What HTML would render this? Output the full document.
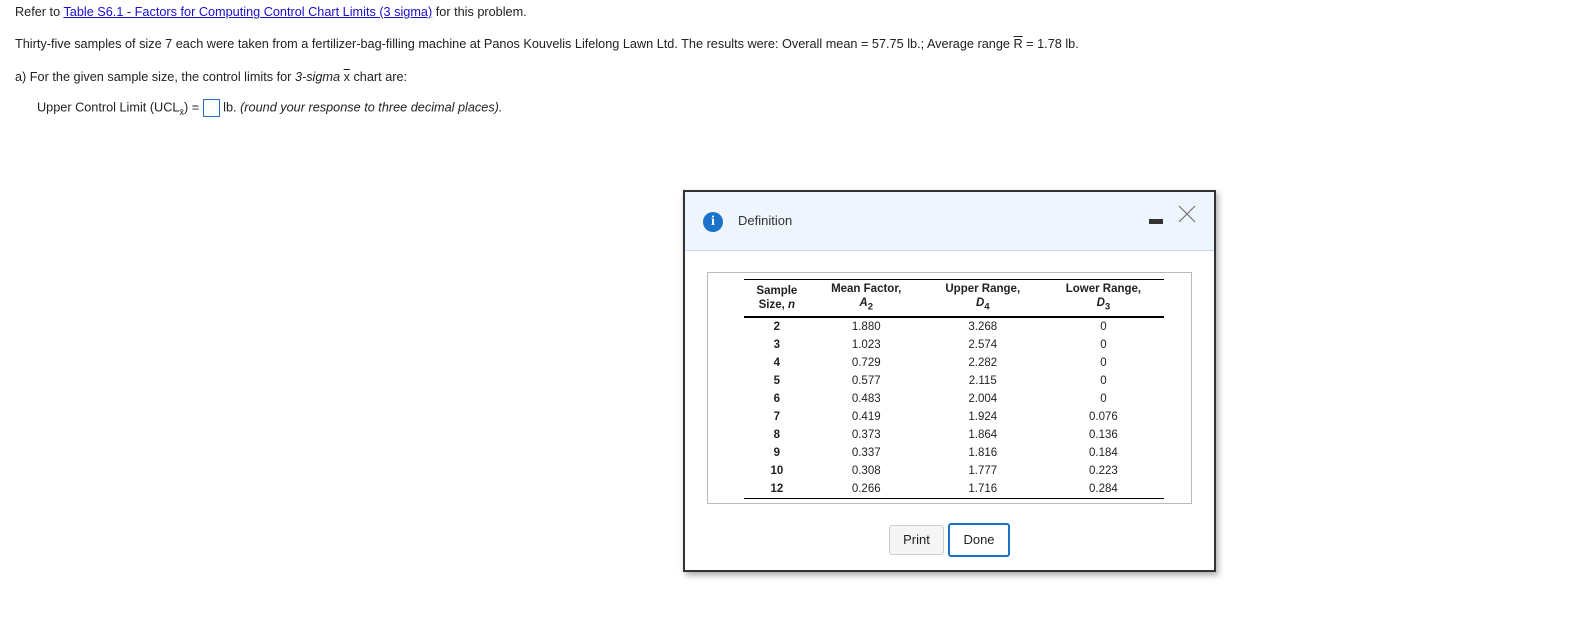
<!DOCTYPE html>
<html><head><style>
body{margin:0;width:1583px;height:623px;background:#fff;font-family:"Liberation Sans",Arial,sans-serif;font-size:12.7px;color:#222;position:relative;overflow:hidden}
.t{position:absolute;white-space:nowrap;line-height:14px}
a{color:#1a0dcc;text-decoration:underline}
.dlg{position:absolute;left:683px;top:190px;width:529px;height:378px;border:2px solid #333;box-shadow:2px 3px 6px rgba(0,0,0,.35);background:#fff;font-size:12px}
.hdr{position:absolute;left:0;top:0;width:529px;height:58px;background:#eef5fd;border-bottom:1px solid #c5dbef}
.box{position:absolute;left:22px;top:80px;width:483px;height:230px;border:1px solid #bbb}
table{position:absolute;left:36px;top:6px;width:420px;border-collapse:collapse;border-top:1px solid #000;border-bottom:1px solid #000;font-size:11.5px}
th{font-weight:bold;line-height:14px;padding:2px 0 2px;border-bottom:2px solid #000}
td{text-align:center;height:18px;padding:0;line-height:18px}
td:first-child{font-weight:bold}
.btn{position:absolute;font-size:13px;text-align:center;border-radius:3px}
</style></head><body>
<div class="t" style="left:15px;top:5px">Refer to <a>Table S6.1 - Factors for Computing Control Chart Limits (3 sigma)</a> for this problem.</div>
<div class="t" style="left:15px;top:37px">Thirty-five samples of size 7 each were taken from a fertilizer-bag-filling machine at Panos Kouvelis Lifelong Lawn Ltd. The results were: Overall mean = 57.75 lb.; Average range <span style="text-decoration:overline">R</span> = 1.78 lb.</div>
<div class="t" style="left:15px;top:70px">a) For the given sample size, the control limits for <i>3-sigma</i> <span style="text-decoration:overline">x</span> chart are:</div>
<div class="t" style="left:37px;top:99px">Upper Control Limit (UCL<sub style="font-size:9px">x̄</sub>) = <span style="display:inline-block;width:15px;height:16px;border:1px solid #2a6ebb;vertical-align:middle"></span> lb. <i>(round your response to three decimal places).</i></div>
<div class="dlg">
<div class="hdr">
<div style="position:absolute;left:18px;top:20px;width:20px;height:20px;border-radius:50%;background:#1a73c8;color:#fff;font:bold 14px 'Liberation Serif',serif;text-align:center;line-height:20px">i</div>
<div class="t" style="left:53px;top:22px;font-size:13px;color:#333">Definition</div>
<div style="position:absolute;left:464px;top:27px;width:14px;height:5px;background:#333"></div>
<svg style="position:absolute;left:493px;top:13px" width="18" height="18"><path d="M1 1L17 17M17 1L1 17" stroke="#666" stroke-width="1"/></svg>
</div>
<div class="box">
<table>
<tr><th>Sample<br>Size, <i>n</i></th><th>Mean Factor,<br><i>A</i><sub>2</sub></th><th>Upper Range,<br><i>D</i><sub>4</sub></th><th>Lower Range,<br><i>D</i><sub>3</sub></th></tr>
<tr><td>2</td><td>1.880</td><td>3.268</td><td>0</td></tr>
<tr><td>3</td><td>1.023</td><td>2.574</td><td>0</td></tr>
<tr><td>4</td><td>0.729</td><td>2.282</td><td>0</td></tr>
<tr><td>5</td><td>0.577</td><td>2.115</td><td>0</td></tr>
<tr><td>6</td><td>0.483</td><td>2.004</td><td>0</td></tr>
<tr><td>7</td><td>0.419</td><td>1.924</td><td>0.076</td></tr>
<tr><td>8</td><td>0.373</td><td>1.864</td><td>0.136</td></tr>
<tr><td>9</td><td>0.337</td><td>1.816</td><td>0.184</td></tr>
<tr><td>10</td><td>0.308</td><td>1.777</td><td>0.223</td></tr>
<tr><td>12</td><td>0.266</td><td>1.716</td><td>0.284</td></tr>
</table>
</div>
<div class="btn" style="left:204px;top:333px;width:53px;height:28px;line-height:28px;border:1px solid #ccc;background:#f5f5f5">Print</div>
<div class="btn" style="left:263px;top:331px;width:58px;height:30px;line-height:30px;border:2px solid #1a73c8">Done</div>
</div>
</body></html>
